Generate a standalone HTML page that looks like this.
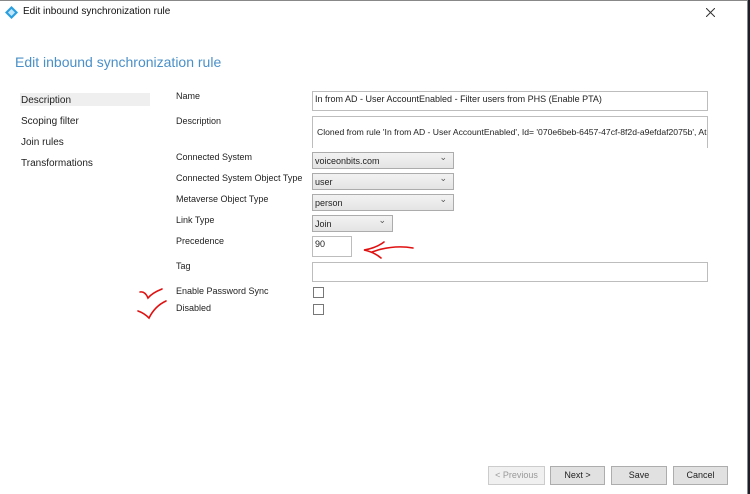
<!DOCTYPE html><html><head><style>
body{margin:0;width:750px;height:494px;background:#fff;position:relative;overflow:hidden;font-family:"Liberation Sans",sans-serif;font-size:9px;color:#222}
.a{position:absolute}
.box{position:absolute;border:1px solid #bdbdbd;background:#fff;box-sizing:border-box;padding:2px 2px;font-size:9px;white-space:nowrap;overflow:hidden}
.dd{position:absolute;border:1px solid #acacac;background:linear-gradient(#f2f2f2,#e4e4e4);box-sizing:border-box;padding:3px 2px;font-size:9px}
.dd:after{content:"⌄";position:absolute;right:6px;top:-1px;font-size:9px;color:#555}
.btn{position:absolute;top:466px;height:19px;border:1px solid #adadad;background:#e1e1e1;box-sizing:border-box;text-align:center;line-height:17px;font-size:9px}
.cb{position:absolute;width:11px;height:11px;border:1px solid #777;box-sizing:border-box;left:313px}
.l{position:absolute;left:176px}
</style></head><body>
<div class="a" style="left:0;top:0;width:750px;height:1px;background:#888"></div>
<svg class="a" style="left:5px;top:6px" width="13" height="13" viewBox="0 0 13 13"><polygon points="6.5,0 13,6.5 6.5,13 0,6.5" fill="#2a9fe0"/><polygon points="6.5,3 10,6.5 6.5,10 3,6.5" fill="#bfe6fb"/></svg>
<div class="a" style="left:23px;top:6px;font-size:10px;color:#111">Edit inbound synchronization rule</div>
<svg class="a" style="left:706px;top:8px" width="9" height="9"><path d="M0 0L9 9M9 0L0 9" stroke="#333" stroke-width="1"/></svg>
<div class="a" style="left:747px;top:0;width:1px;height:494px;background:#888"></div>
<div class="a" style="left:748px;top:0;width:2px;height:494px;background:#1a1f2a"></div>
<div class="a" style="left:15px;top:54px;font-size:14px;color:#4a90c8">Edit inbound synchronization rule</div>
<div class="a" style="left:20px;top:93px;width:130px;height:13px;background:#efefef"></div>
<div class="a" style="left:21px;top:95px;font-size:10px">Description</div>
<div class="a" style="left:21px;top:116px;font-size:10px">Scoping filter</div>
<div class="a" style="left:21px;top:137px;font-size:10px">Join rules</div>
<div class="a" style="left:21px;top:158px;font-size:10px">Transformations</div>
<div class="l" style="top:91px">Name</div>
<div class="l" style="top:116px">Description</div>
<div class="l" style="top:152px">Connected System</div>
<div class="l" style="top:173px">Connected System Object Type</div>
<div class="l" style="top:194px">Metaverse Object Type</div>
<div class="l" style="top:215px">Link Type</div>
<div class="l" style="top:236px">Precedence</div>
<div class="l" style="top:261px">Tag</div>
<div class="l" style="top:286px">Enable Password Sync</div>
<div class="l" style="top:303px">Disabled</div>
<div class="box" style="left:312px;top:91px;width:396px;height:20px">In from AD - User AccountEnabled - Filter users from PHS (Enable PTA)</div>
<div class="box" style="left:312px;top:116px;width:396px;height:32px;border-bottom:none;padding-top:10px;padding-left:4px;font-size:8.6px">Cloned from rule 'In from AD - User AccountEnabled', Id= '070e6beb-6457-47cf-8f2d-a9efdaf2075b', At</div>
<div class="dd" style="left:312px;top:152px;width:142px;height:17px">voiceonbits.com</div>
<div class="dd" style="left:312px;top:173px;width:142px;height:17px">user</div>
<div class="dd" style="left:312px;top:194px;width:142px;height:17px">person</div>
<div class="dd" style="left:312px;top:215px;width:81px;height:17px">Join</div>
<div class="box" style="left:312px;top:236px;width:40px;height:21px">90</div>
<div class="box" style="left:312px;top:262px;width:396px;height:20px"></div>
<div class="cb" style="top:287px"></div>
<div class="cb" style="top:304px"></div>
<svg class="a" style="left:0;top:0" width="750" height="494"><g fill="none" stroke="#e01010" stroke-width="1.6" stroke-linecap="round">
<path d="M413 248 Q396 245 378 250 L372 252 M384 242 Q376 248 364 250 Q374 252 381 258"/>
<path d="M140 292 Q145 291 148 298 Q152 293 162 289"/>
<path d="M138 311 Q144 313 149 318 Q155 306 166 301"/></g></svg>
<div class="btn" style="left:488px;width:57px;color:#999;background:#f0f0f0;border-color:#ccc">&lt; Previous</div>
<div class="btn" style="left:550px;width:55px">Next &gt;</div>
<div class="btn" style="left:611px;width:56px">Save</div>
<div class="btn" style="left:673px;width:55px">Cancel</div>
</body></html>
